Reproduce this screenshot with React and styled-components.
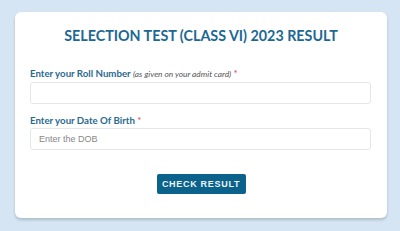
import React from 'react'
import styled, { createGlobalStyle } from 'styled-components'

const GlobalStyle = createGlobalStyle`
    html, body {
        margin: 0;
        padding: 0;
        background: #d5e5f4;
    }
    * { box-sizing: border-box; }
`;

function App() {
    return (
        <Page>
            <GlobalStyle />
            <Card>
                <Title>SELECTION TEST (CLASS VI) 2023 RESULT</Title>
                <Field>
                    <Label>
                        Enter your Roll Number <Hint>(as given on your admit card)</Hint> <Star>*</Star>
                    </Label>
                    <Input type="text" />
                </Field>
                <Field>
                    <Label>
                        Enter your Date Of Birth <Star>*</Star>
                    </Label>
                    <Input type="text" placeholder="Enter the DOB" />
                </Field>
                <Actions>
                    <Button>CHECK RESULT</Button>
                </Actions>
            </Card>
        </Page>
    )
}

export default App

const Page = styled.div`
    width: 400px;
    height: 231px;
    padding: 12px 13px 0 15px;
    background: #d5e5f4;
`;

const Card = styled.div`
    width: 372px;
    height: 206px;
    background: #fff;
    border-radius: 6px;
    box-shadow: 0 2px 3px rgba(0, 0, 0, 0.18);
    padding: 14px 15px 0 15px;
    display: flex;
    flex-direction: column;
`;

const Title = styled.h1`
    margin: 0 0 21px;
    text-align: center;
    font-family: Lato, "Liberation Sans", sans-serif;
    font-weight: 700;
    font-size: 14.3px;
    line-height: 20px;
    color: #1c6893;
`;

const Field = styled.div`
    display: flex;
    flex-direction: column;
    gap: 1px;
    margin-bottom: 10px;
`;

const Label = styled.label`
    font-family: Lato, "Liberation Sans", sans-serif;
    font-weight: 700;
    font-size: 9.7px;
    line-height: 13px;
    color: #2b6a8f;
`;

const Hint = styled.span`
    font-weight: 400;
    font-style: italic;
    font-size: 8.3px;
    color: #555;
`;

const Star = styled.span`
    color: #e0434b;
    font-weight: 400;
`;

const Input = styled.input`
    width: 341px;
    height: 22px;
    border: 1px solid #e4e7ea;
    border-radius: 3px;
    padding: 0 8px;
    font-family: "Liberation Sans", Arial, sans-serif;
    font-size: 9px;
    color: #333;
    outline: none;
    &::placeholder {
        color: #888;
    }
`;

const Actions = styled.div`
    display: flex;
    justify-content: center;
    margin-top: 14px;
`;

const Button = styled.button`
    width: 89px;
    height: 20px;
    border: none;
    border-radius: 2px;
    background: #0b628b;
    color: #eef3f7;
    font-family: "Liberation Sans", Arial, sans-serif;
    font-weight: 700;
    font-size: 9px;
    letter-spacing: 0.7px;
    padding: 0;
    cursor: pointer;
`;
